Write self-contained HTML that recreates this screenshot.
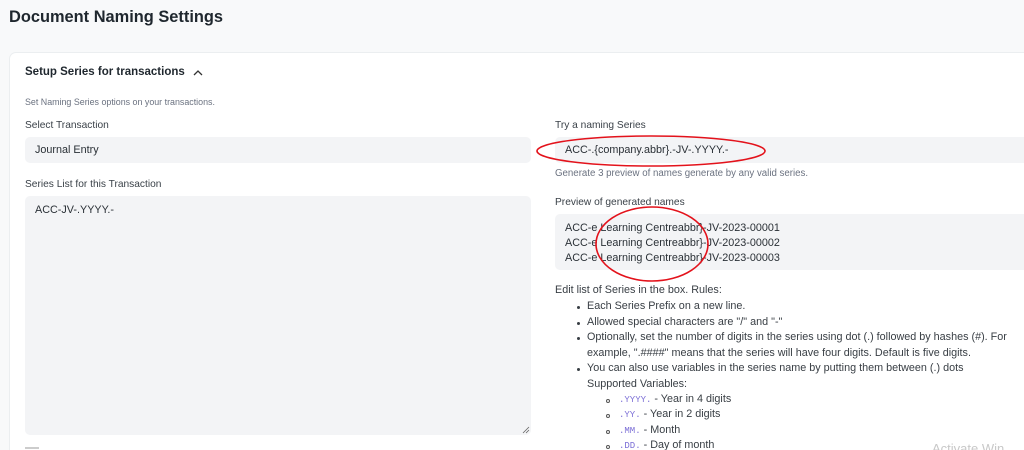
<!DOCTYPE html>
<html><head><meta charset="utf-8">
<style>
*{box-sizing:border-box;margin:0;padding:0}
html,body{width:1024px;height:450px;overflow:hidden;background:#f8f9fa;font-family:"Liberation Sans",sans-serif;color:#1f272e}
body{position:relative}
.abs{position:absolute}
h1{position:absolute;left:9px;top:8px;font-size:16.4px;font-weight:bold;color:#1f272e}
.card{position:absolute;left:9px;top:52px;width:1030px;height:398px;background:#fff;border:1px solid #ebeef0;border-bottom:none;border-radius:7px 7px 0 0}
.lbl{position:absolute;font-size:10.2px;color:#3a4148}
.inp{position:absolute;background:#f3f4f6;border-radius:5px;font-size:10.8px;color:#2a3036;padding-left:10px}
.t{position:absolute;font-size:10.8px;color:#383e44;white-space:nowrap}
.mono{font-family:"Liberation Mono",monospace;color:#7c6fd6;font-size:9px}
.dot{position:absolute;width:3px;height:3px;border-radius:50%;background:#383e44}
.circ{position:absolute;width:4px;height:4px;border-radius:50%;border:1px solid #555}
</style></head><body>
<h1>Document Naming Settings</h1>
<div class="card"></div>
<div class="abs" style="left:25px;top:66px;font-size:11.5px;font-weight:bold;color:#1f272e">Setup Series for transactions</div>
<svg class="abs" style="left:192px;top:69px" width="12" height="8" viewBox="0 0 12 8"><path d="M2 6 L6 2 L10 6" fill="none" stroke="#333" stroke-width="1.3"/></svg>
<div class="abs" style="left:25px;top:97px;font-size:8.9px;color:#6b7280">Set Naming Series options on your transactions.</div>

<div class="lbl" style="left:25px;top:120px">Select Transaction</div>
<div class="inp" style="left:25px;top:137px;width:506px;height:26px;line-height:26px">Journal Entry</div>
<div class="lbl" style="left:25px;top:179px">Series List for this Transaction</div>
<div class="inp" style="left:25px;top:196px;width:506px;height:239px;padding-top:8px;line-height:13px">ACC-JV-.YYYY.-</div>
<svg class="abs" style="left:522px;top:426px" width="8" height="8"><path d="M1 7 L7 1 M4 7 L7 4" stroke="#666" stroke-width="0.8"/></svg>
<div class="abs" style="left:25px;top:447px;width:14px;height:2px;background:#ccc"></div>

<div class="lbl" style="left:555px;top:120px">Try a naming Series</div>
<div class="inp" style="left:555px;top:137px;width:480px;height:26px;line-height:26px">ACC-.{company.abbr}.-JV-.YYYY.-</div>
<div class="abs" style="left:555px;top:168px;font-size:9.7px;color:#6b7280">Generate 3 preview of names generate by any valid series.</div>
<div class="lbl" style="left:555px;top:197px">Preview of generated names</div>
<div class="inp" style="left:555px;top:214px;width:480px;height:56px;padding-top:7px;line-height:15.2px">ACC-e Learning Centreabbr}-JV-2023-00001<br>ACC-e Learning Centreabbr}-JV-2023-00002<br>ACC-e Learning Centreabbr}-JV-2023-00003</div>

<div class="t" style="left:555px;top:284px">Edit list of Series in the box. Rules:</div>
<div class="dot" style="left:577px;top:306px"></div><div class="t" style="left:587px;top:300px">Each Series Prefix on a new line.</div>
<div class="dot" style="left:577px;top:322px"></div><div class="t" style="left:587px;top:316px">Allowed special characters are "/" and "-"</div>
<div class="dot" style="left:577px;top:337px"></div><div class="t" style="left:587px;top:331px">Optionally, set the number of digits in the series using dot (.) followed by hashes (#). For</div>
<div class="t" style="left:587px;top:347px">example, ".####" means that the series will have four digits. Default is five digits.</div>
<div class="dot" style="left:577px;top:368px"></div><div class="t" style="left:587px;top:362px">You can also use variables in the series name by putting them between (.) dots</div>
<div class="t" style="left:587px;top:378px">Supported Variables:</div>
<div class="circ" style="left:606px;top:399px"></div><div class="t" style="left:619px;top:393px"><span class="mono">.YYYY.</span> - Year in 4 digits</div>
<div class="circ" style="left:606px;top:414px"></div><div class="t" style="left:619px;top:408px"><span class="mono">.YY.</span> - Year in 2 digits</div>
<div class="circ" style="left:606px;top:430px"></div><div class="t" style="left:619px;top:424px"><span class="mono">.MM.</span> - Month</div>
<div class="circ" style="left:606px;top:445px"></div><div class="t" style="left:619px;top:439px"><span class="mono">.DD.</span> - Day of month</div>

<div class="abs" style="left:932px;top:441px;font-size:13px;color:#c8c8c8">Activate Win</div>

<svg class="abs" style="left:0;top:0" width="1024" height="450">
<ellipse cx="651" cy="151" rx="114" ry="15" fill="none" stroke="#e3121b" stroke-width="1.6"/>
<ellipse cx="652" cy="244" rx="56" ry="37" fill="none" stroke="#e3121b" stroke-width="1.6"/>
</svg>
</body></html>
